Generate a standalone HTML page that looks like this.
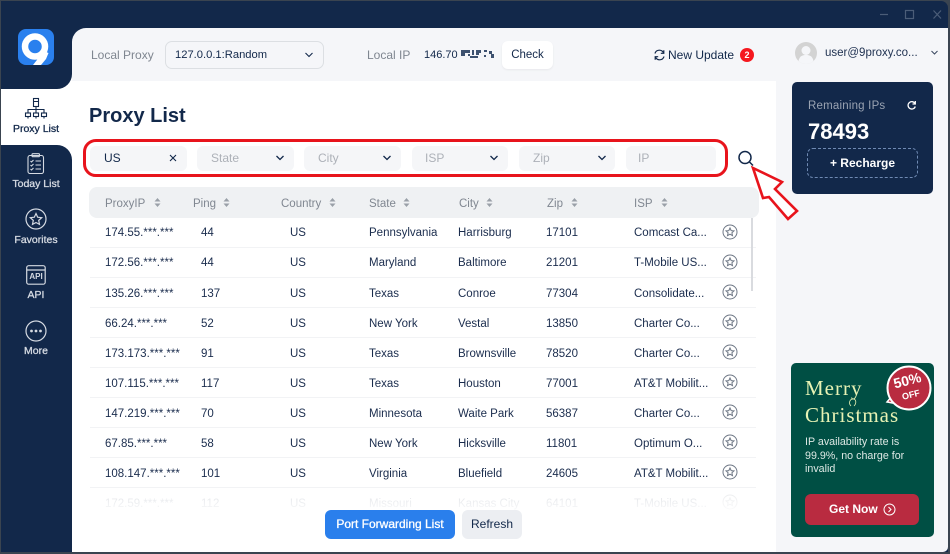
<!DOCTYPE html>
<html><head><meta charset="utf-8">
<style>
*{box-sizing:border-box;margin:0;padding:0}
html,body{width:950px;height:554px;overflow:hidden;background:#3a4450}
body{font-family:"Liberation Sans",sans-serif;color:#12284a;position:relative}
.a{position:absolute;white-space:nowrap}
.t{position:absolute;white-space:nowrap;font-size:11.5px;line-height:14px;color:#1a2c4d;margin-top:1px}
.h{position:absolute;white-space:nowrap;font-size:11.5px;line-height:14px;color:#808791;top:196px}
.f{position:absolute;top:146px;height:25px;background:#f5f6f8;border-radius:6px;font-size:12px;line-height:25px;color:#adb1b8;padding-left:14px}
.sep{position:absolute;left:90px;width:666px;height:1px;background:#f2f3f5}
.nav{position:absolute;left:0;width:72px;text-align:center;font-size:10.5px;line-height:12px;color:#d5dae2;-webkit-text-stroke:.3px currentColor}
.m{-webkit-text-stroke:.3px currentColor}
</style></head><body>
<!-- window -->
<div class="a" style="left:1px;top:1px;width:947px;height:551px;background:#12284a;border-radius:7px 7px 0 0"></div>
<div class="a" style="left:72px;top:28px;width:876px;height:524px;background:#f5f6f9;border-radius:14px 0 5px 0"></div>
<div class="a" style="left:72px;top:81px;width:704px;height:471px;background:#fff"></div>
<!-- sidebar -->
<div class="a" style="left:1px;top:60px;width:71px;height:105px;background:#fff"></div>
<div class="a" style="left:1px;top:1px;width:71px;height:88px;background:#12284a;border-radius:0 0 15px 0"></div>
<div class="a" style="left:1px;top:145px;width:71px;height:407px;background:#12284a;border-radius:0 15px 0 0"></div>
<!-- window controls -->
<svg class="a" style="left:870px;top:5px" width="76" height="20" fill="none" stroke="#4b5d78" stroke-width="1.2"><path d="M10 9.500h8"/><rect x="35.500" y="5.500" width="8" height="8"/><path d="M63.500 5.500l7.500 8M71 5.500l-7.500 8"/></svg>
<!-- logo -->
<div class="a" style="left:18px;top:29px;width:36px;height:36px;background:#2a80ee;border-radius:8px"></div>
<svg class="a" style="left:18px;top:29px" width="36" height="36"><circle cx="17" cy="17.500" r="10" fill="none" stroke="#fff" stroke-width="6.500"/><path d="M15 36L26 22l4.500 2-2.500 6-5 6z" fill="#fff"/></svg>
<!-- nav -->
<svg class="a" style="left:24px;top:97px" width="24" height="23" fill="none" stroke="#12284a" stroke-width="1.100"><rect x="9.500" y="1.500" width="5" height="8"/><path d="M10 4.500h4M12 9.500v3M4 16v-3.500h16V16M12 12.500V16"/><rect x="1.500" y="16" width="5" height="3.500"/><rect x="9.500" y="16" width="5" height="3.500"/><rect x="17.500" y="16" width="5" height="3.500"/><path d="M4 19.500v2M12 19.500v2M20 19.500v2"/></svg>
<div class="nav" style="top:123px;color:#12284a">Proxy List</div>
<svg class="a" style="left:27px;top:153px" width="18" height="21" fill="none" stroke="#d5dae2" stroke-width="1.100"><rect x="1" y="2.500" width="15.500" height="18" rx="2"/><rect x="5" y=".7" width="7.500" height="3" rx="1"/><path d="M3.500 8l1 1 2-2M3.500 12l1 1 2-2M3.500 16l1 1 2-2M8.500 8h5.500M8.500 12h5.500M8.500 16h5.500"/></svg>
<div class="nav" style="top:178px">Today List</div>
<svg class="a" style="left:25px;top:208px" width="22" height="22" fill="none" stroke="#d5dae2" stroke-width="1.200"><circle cx="11" cy="11" r="10"/><path d="M11 5.500l1.700 3.700 4 .5-3 2.700.8 4L11 14.500l-3.500 1.900.8-4-3-2.700 4-.5z"/></svg>
<div class="nav" style="top:234px">Favorites</div>
<svg class="a" style="left:26px;top:265px" width="20" height="20" fill="none" stroke="#d5dae2" stroke-width="1.200"><rect x=".7" y=".7" width="18.500" height="18.500" rx="2"/><path d="M1 5h18"/></svg>
<div class="a" style="left:26px;top:272px;width:20px;text-align:center;font-size:8px;font-weight:bold;color:#d5dae2;line-height:10px">API</div>
<div class="nav" style="top:289px">API</div>
<svg class="a" style="left:25px;top:320px" width="22" height="22" fill="none" stroke="#d5dae2" stroke-width="1.200"><circle cx="11" cy="11" r="10"/><circle cx="6.500" cy="11" r=".8" fill="#d5dae2"/><circle cx="11" cy="11" r=".8" fill="#d5dae2"/><circle cx="15.500" cy="11" r=".8" fill="#d5dae2"/></svg>
<div class="nav" style="top:345px">More</div>
<!-- header -->
<div class="a" style="left:91px;top:48px;font-size:12px;line-height:14px;color:#7f8690">Local Proxy</div>
<div class="a" style="left:165px;top:41px;width:159px;height:28px;border:1px solid #dcdfe3;border-radius:7px;background:#f5f6f9;font-size:11.200px;line-height:26px;padding-left:9px;color:#12284a" >127.0.0.1:Random</div>
<svg class="a" style="left:304px;top:52px" width="10" height="6" fill="none" stroke="#12284a" stroke-width="1.100"><path d="M1.500 1l3.500 3.500L8.500 1"/></svg>
<div class="a" style="left:367px;top:48px;font-size:12px;line-height:14px;color:#7f8690">Local IP</div>
<div class="a" style="left:424px;top:48px;font-size:11px;line-height:14px;color:#12284a">146.70</div>
<svg class="a" style="left:460px;top:50px" width="36" height="9" fill="#1e3557" opacity=".85"><path d="M1 0h9v3H5v3H1zM8 4h2v2H8zM10 6h7v2h-7zM12 0h2v5h-2zM16 0h5v3h-2v2h-3zM16 6h2v2h-2zM24 0h3v2h-3zM24 5h2v2h-2zM29 1h3v3h-3zM31 4h3v4h-3z"/></svg>
<div class="a" style="left:502px;top:41px;width:51px;height:28px;background:#fff;border-radius:6px;text-align:center;font-size:11.500px;line-height:28px;color:#12284a;box-shadow:0 1px 2px rgba(0,0,0,.06)">Check</div>
<svg class="a" style="left:654px;top:49px" width="11" height="12" fill="none" stroke="#12284a" stroke-width="1.200"><path d="M1 4.500A4.500 4.500 0 0 1 9.500 4M10 7.500A4.500 4.500 0 0 1 1.500 8M9.800 1.200V4.300H6.800M1.200 10.800V7.700H4.200"/></svg>
<div class="a" style="left:668px;top:48px;font-size:12px;line-height:14px;color:#12284a">New Update</div>
<div class="a" style="left:740px;top:48px;width:14px;height:14px;background:#f5181f;border-radius:50%;color:#fff;font-size:9px;font-weight:bold;line-height:14px;text-align:center">2</div>
<svg class="a" style="left:795px;top:42px" width="22" height="22"><circle cx="11" cy="11" r="11" fill="#d3d3d3"/><circle cx="11" cy="8.500" r="4.500" fill="#f5f6f9"/><path d="M3.500 19c1-5 4-6 7.500-6s6.500 1 7.500 6A11 11 0 0 1 3.500 19z" fill="#f5f6f9"/></svg>
<div class="a" style="left:825px;top:46px;font-size:11.500px;line-height:14px;color:#1e3050">user@9proxy.co...</div>
<svg class="a" style="left:930px;top:50px" width="9" height="6" fill="none" stroke="#3a4860" stroke-width="1"><path d="M1.500 1l3 3 3-3"/></svg>
<!-- title -->
<div class="a" style="left:89px;top:103px;font-size:20px;line-height:26px;font-weight:bold;color:#12284a">Proxy List</div>
<!-- filters -->
<div class="f" style="left:90px;width:97px;color:#12284a">US</div>
<svg class="a" style="left:169px;top:154px" width="8" height="8" fill="none" stroke="#12284a" stroke-width="1.100"><path d="M1 1l6 6M7 1L1 7"/></svg>
<div class="f" style="left:197px;width:97px">State</div>
<div class="f" style="left:304px;width:97px">City</div>
<div class="f" style="left:412px;width:96px;padding-left:13px">ISP</div>
<div class="f" style="left:519px;width:96px">Zip</div>
<div class="f" style="left:626px;width:90px;padding-left:12px">IP</div>
<svg class="a" style="left:275px;top:155px" width="10" height="6" fill="none" stroke="#12284a" stroke-width="1.300"><path d="M1.500 1l3.500 3.500L8.500 1"/></svg>
<svg class="a" style="left:382px;top:155px" width="10" height="6" fill="none" stroke="#12284a" stroke-width="1.300"><path d="M1.500 1l3.500 3.500L8.500 1"/></svg>
<svg class="a" style="left:489px;top:155px" width="10" height="6" fill="none" stroke="#12284a" stroke-width="1.300"><path d="M1.500 1l3.500 3.500L8.500 1"/></svg>
<svg class="a" style="left:597px;top:155px" width="10" height="6" fill="none" stroke="#12284a" stroke-width="1.300"><path d="M1.500 1l3.500 3.500L8.500 1"/></svg>
<div class="a" style="left:83px;top:139px;width:645px;height:38px;border:3px solid #e8141c;border-radius:13px"></div>
<svg class="a" style="left:737px;top:150px" width="17" height="17" fill="none" stroke="#12284a" stroke-width="1.500"><circle cx="8" cy="7.500" r="6"/><path d="M12.500 12l3.500 3.500"/></svg>
<svg class="a" style="left:750px;top:165px" width="52" height="58" fill="#fff" stroke="#e8141c" stroke-width="2.600"><path d="M3 3L32 17 25 24 47 46 38 54 19 32 13 33z"/></svg>
<!-- table head -->
<div class="a" style="left:89px;top:187px;width:670px;height:31px;background:#eff1f3;border-radius:8px"></div>
<div class="h" style="left:105px;top:197px">ProxyIP</div><div class="h" style="left:193px;top:197px">Ping</div><div class="h" style="left:281px;top:197px">Country</div><div class="h" style="left:369px;top:197px">State</div><div class="h" style="left:459px;top:197px">City</div><div class="h" style="left:547px;top:197px">Zip</div><div class="h" style="left:634px;top:197px">ISP</div>
<svg class="a" style="left:154px;top:197px" width="7" height="11" fill="#9aa0a8"><path d="M3.500 1L6.500 4.500H.5zM3.500 10L.5 6.500h6z"/></svg>
<svg class="a" style="left:223px;top:197px" width="7" height="11" fill="#9aa0a8"><path d="M3.500 1L6.500 4.500H.5zM3.500 10L.5 6.500h6z"/></svg>
<svg class="a" style="left:329px;top:197px" width="7" height="11" fill="#9aa0a8"><path d="M3.500 1L6.500 4.500H.5zM3.500 10L.5 6.500h6z"/></svg>
<svg class="a" style="left:403px;top:197px" width="7" height="11" fill="#9aa0a8"><path d="M3.500 1L6.500 4.500H.5zM3.500 10L.5 6.500h6z"/></svg>
<svg class="a" style="left:486px;top:197px" width="7" height="11" fill="#9aa0a8"><path d="M3.500 1L6.500 4.500H.5zM3.500 10L.5 6.500h6z"/></svg>
<svg class="a" style="left:571px;top:197px" width="7" height="11" fill="#9aa0a8"><path d="M3.500 1L6.500 4.500H.5zM3.500 10L.5 6.500h6z"/></svg>
<svg class="a" style="left:661px;top:197px" width="7" height="11" fill="#9aa0a8"><path d="M3.500 1L6.500 4.500H.5zM3.500 10L.5 6.500h6z"/></svg>
<!-- rows -->
<div class="sep" style="top:247px"></div><div class="sep" style="top:277px"></div><div class="sep" style="top:307px"></div><div class="sep" style="top:337px"></div><div class="sep" style="top:367px"></div><div class="sep" style="top:397px"></div><div class="sep" style="top:427px"></div><div class="sep" style="top:457px"></div><div class="sep" style="top:487px"></div>
<div class="t" style="left:105px;top:225px">174.55.***.***</div><div class="t" style="left:201px;top:225px">44</div><div class="t" style="left:290px;top:225px">US</div><div class="t" style="left:369px;top:225px">Pennsylvania</div><div class="t" style="left:458px;top:225px">Harrisburg</div><div class="t" style="left:546px;top:225px">17101</div><div class="t" style="left:634px;top:225px">Comcast Ca...</div>
<div class="t" style="left:105px;top:255px">172.56.***.***</div><div class="t" style="left:201px;top:255px">44</div><div class="t" style="left:290px;top:255px">US</div><div class="t" style="left:369px;top:255px">Maryland</div><div class="t" style="left:458px;top:255px">Baltimore</div><div class="t" style="left:546px;top:255px">21201</div><div class="t" style="left:634px;top:255px">T-Mobile US...</div>
<div class="t" style="left:105px;top:286px">135.26.***.***</div><div class="t" style="left:201px;top:286px">137</div><div class="t" style="left:290px;top:286px">US</div><div class="t" style="left:369px;top:286px">Texas</div><div class="t" style="left:458px;top:286px">Conroe</div><div class="t" style="left:546px;top:286px">77304</div><div class="t" style="left:634px;top:286px">Consolidate...</div>
<div class="t" style="left:105px;top:316px">66.24.***.***</div><div class="t" style="left:201px;top:316px">52</div><div class="t" style="left:290px;top:316px">US</div><div class="t" style="left:369px;top:316px">New York</div><div class="t" style="left:458px;top:316px">Vestal</div><div class="t" style="left:546px;top:316px">13850</div><div class="t" style="left:634px;top:316px">Charter Co...</div>
<div class="t" style="left:105px;top:346px">173.173.***.***</div><div class="t" style="left:201px;top:346px">91</div><div class="t" style="left:290px;top:346px">US</div><div class="t" style="left:369px;top:346px">Texas</div><div class="t" style="left:458px;top:346px">Brownsville</div><div class="t" style="left:546px;top:346px">78520</div><div class="t" style="left:634px;top:346px">Charter Co...</div>
<div class="t" style="left:105px;top:376px">107.115.***.***</div><div class="t" style="left:201px;top:376px">117</div><div class="t" style="left:290px;top:376px">US</div><div class="t" style="left:369px;top:376px">Texas</div><div class="t" style="left:458px;top:376px">Houston</div><div class="t" style="left:546px;top:376px">77001</div><div class="t" style="left:634px;top:376px">AT&amp;T Mobilit...</div>
<div class="t" style="left:105px;top:406px">147.219.***.***</div><div class="t" style="left:201px;top:406px">70</div><div class="t" style="left:290px;top:406px">US</div><div class="t" style="left:369px;top:406px">Minnesota</div><div class="t" style="left:458px;top:406px">Waite Park</div><div class="t" style="left:546px;top:406px">56387</div><div class="t" style="left:634px;top:406px">Charter Co...</div>
<div class="t" style="left:105px;top:436px">67.85.***.***</div><div class="t" style="left:201px;top:436px">58</div><div class="t" style="left:290px;top:436px">US</div><div class="t" style="left:369px;top:436px">New York</div><div class="t" style="left:458px;top:436px">Hicksville</div><div class="t" style="left:546px;top:436px">11801</div><div class="t" style="left:634px;top:436px">Optimum O...</div>
<div class="t" style="left:105px;top:466px">108.147.***.***</div><div class="t" style="left:201px;top:466px">101</div><div class="t" style="left:290px;top:466px">US</div><div class="t" style="left:369px;top:466px">Virginia</div><div class="t" style="left:458px;top:466px">Bluefield</div><div class="t" style="left:546px;top:466px">24605</div><div class="t" style="left:634px;top:466px">AT&amp;T Mobilit...</div>
<div class="t" style="left:105px;top:496px">172.59.***.***</div><div class="t" style="left:201px;top:496px">112</div><div class="t" style="left:290px;top:496px">US</div><div class="t" style="left:369px;top:496px">Missouri</div><div class="t" style="left:458px;top:496px">Kansas City</div><div class="t" style="left:546px;top:496px">64101</div><div class="t" style="left:634px;top:496px">T-Mobile US...</div>
<!-- stars -->
<svg class="a" style="left:722px;top:224px" width="16" height="287" fill="none" stroke="#6e7785" stroke-width="1"><g id="s"><circle cx="8" cy="8" r="7"/><path d="M8 4l1.200 2.600 2.800.3-2.100 1.900.6 2.800L8 10.200l-2.500 1.400.6-2.800L4 6.900l2.800-.3z"/></g><use href="#s" y="30"/><use href="#s" y="60"/><use href="#s" y="90"/><use href="#s" y="120"/><use href="#s" y="150"/><use href="#s" y="180"/><use href="#s" y="210"/><use href="#s" y="240"/><use href="#s" y="270"/></svg>
<div class="a" style="left:751px;top:218px;width:2px;height:73px;background:#d9dbdf"></div>
<!-- fade -->
<div class="a" style="left:89px;top:488px;width:680px;height:28px;background:linear-gradient(rgba(255,255,255,.84),rgba(255,255,255,1))"></div>
<!-- buttons -->
<div class="a m" style="left:325px;top:510px;width:130px;height:29px;background:#2a7fec;border-radius:6px;color:#fff;font-size:12px;line-height:29px;text-align:center">Port Forwarding List</div>
<div class="a" style="left:462px;top:510px;width:60px;height:29px;background:#eceef2;border-radius:6px;color:#12284a;font-size:12px;line-height:29px;text-align:center">Refresh</div>
<!-- remaining card -->
<div class="a" style="left:792px;top:82px;width:141px;height:112px;background:#12284a;border-radius:5px"></div>
<div class="a" style="left:808px;top:99px;font-size:11.500px;line-height:14px;color:#9aa3b2;letter-spacing:.2px">Remaining IPs</div>
<svg class="a" style="left:906px;top:100px" width="11" height="11" fill="none" stroke="#fff" stroke-width="1.300"><path d="M9 3.500A3.700 3.700 0 1 0 9.300 6.500M9.300 1v3H6.500"/></svg>
<div class="a" style="left:808px;top:119px;font-size:22px;line-height:26px;font-weight:bold;color:#fff">78493</div>
<div class="a" style="left:807px;top:148px;width:111px;height:30px;border:1px dashed #6f8ab3;border-radius:6px;color:#fff;font-size:12px;font-weight:bold;line-height:28px;text-align:center">+ Recharge</div>
<!-- promo -->
<div class="a" style="left:791px;top:363px;width:143px;height:174px;background:#004f44;border-radius:5px"></div>
<div class="a" style="left:805px;top:375px;font-family:'Liberation Serif',serif;font-size:21px;line-height:27px;color:#e7f2b4;letter-spacing:1px">Merry<br>Christmas</div>
<svg class="a" style="left:846px;top:392px" width="14" height="18" fill="none" stroke="#e7f2b4" stroke-width=".8"><path d="M5 14c-3-3-1-7 2-7s4 4 1 7"/></svg>
<div class="a" style="left:805px;top:436px;font-size:10.700px;line-height:13.500px;color:#dce8e4">IP availability rate is<br>99.9%, no charge for<br>invalid</div>
<div class="a" style="left:805px;top:494px;width:114px;height:31px;background:#b92b40;border-radius:6px;color:#fff;font-size:12px;font-weight:bold;line-height:31px;padding-left:24px">Get Now</div>
<svg class="a" style="left:883px;top:503px" width="13" height="13" fill="none" stroke="#fff" stroke-width="1"><circle cx="6.500" cy="6.500" r="5.500"/><path d="M5.500 4l2.500 2.500L5.500 9"/></svg>
<svg class="a" style="left:885px;top:364px" width="47" height="47"><path d="M2 38l5-6 6 8z" fill="#b92b40" stroke="#fff" stroke-width="1.500"/><circle cx="24" cy="24" r="21.500" fill="#b92b40" stroke="#fff" stroke-width="2"/></svg>
<div class="a" style="left:888px;top:374px;width:42px;text-align:center;color:#fff;font-weight:bold;font-size:14px;line-height:13px;transform:rotate(-14deg)">50%<br><span style="font-size:9px;line-height:10px">OFF</span></div>
</body></html>
